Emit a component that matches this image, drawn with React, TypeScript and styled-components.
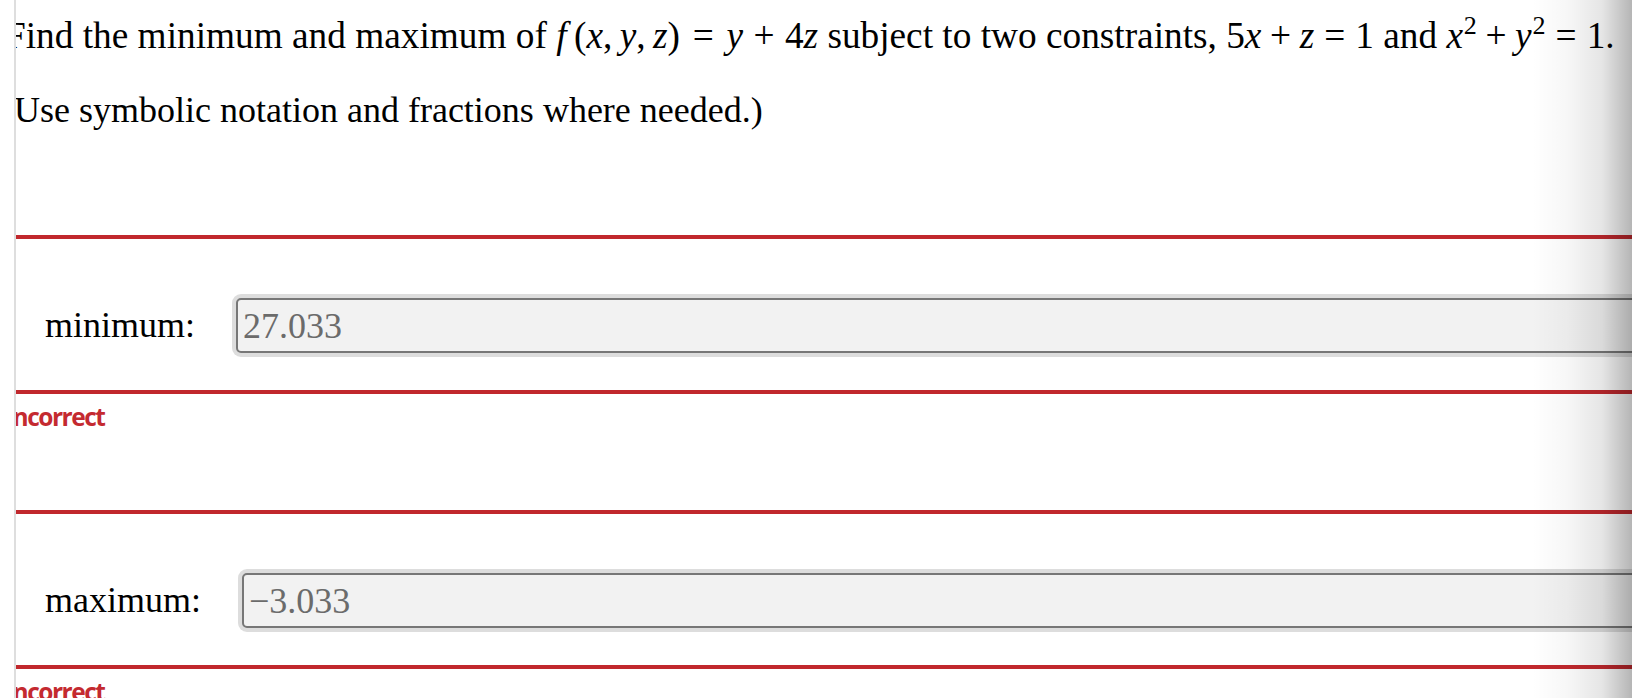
import React from 'react'
import styled, { createGlobalStyle } from 'styled-components'

const GlobalStyle = createGlobalStyle`
  html, body {
    margin: 0;
    padding: 0;
    height: 100%;
    overflow: hidden;
    background: #ffffff;
  }
`

const Frame = styled.div`
  position: relative;
  height: 100vh;
  margin-left: 14px;
  border-left: 2px solid #dedede;
  overflow: hidden;
`

const Content = styled.div`
  width: 1720px;
  margin-left: -14px;
  font-family: "Liberation Serif", "Times New Roman", serif;
  font-size: 36px;
  color: #000;
`

const Prompt = styled.p<{ $gap: number; $size?: number; $indent?: number }>`
  margin: ${({ $gap }) => $gap}px 0 0 ${({ $indent = 0 }) => $indent}px;
  font-size: ${({ $size = 36 }) => $size}px;
  line-height: 41px;
  white-space: nowrap;
`

const V = styled.i`
  font-style: italic;
`

const FVar = styled(V)`
  margin-right: 0.2em;
`

const Rel = styled.span<{ $wide?: boolean }>`
  margin: 0 ${({ $wide }) => ($wide ? '0.34em' : '0.27em')};
`

const Bin = styled.span<{ $wide?: boolean }>`
  margin: 0 ${({ $wide }) => ($wide ? '0.28em' : '0.23em')};
`

const Thin = styled.span`
  margin-right: 0.2em;
`

const Sup = styled.sup`
  font-size: 70%;
  line-height: 0;
  vertical-align: 0.55em;
  margin-left: 0.03em;
`

const Part = styled.section<{ $gap: number }>`
  margin-top: ${({ $gap }) => $gap}px;
  border-top: 4px solid #c1282d;
  border-bottom: 4px solid #c1282d;
  padding: 59px 0 37px 43px;
`

const Row = styled.div`
  display: flex;
  align-items: center;
`

const Label = styled.span`
  margin-right: 41px;
  line-height: 41px;
  white-space: nowrap;
`

const Answer = styled.input`
  flex: 1;
  box-sizing: border-box;
  height: 55px;
  padding: 0 5px;
  border: 2px solid #777777;
  border-radius: 5px;
  box-shadow: 0 0 0 4px #dddddd;
  background: #f2f2f2;
  font-family: "Liberation Serif", "Times New Roman", serif;
  font-size: 36px;
  color: #6b6b6b;
  outline: none;
`

const Feedback = styled.div`
  box-sizing: border-box;
  height: 116px;
  padding: 7px 0 0 4px;
  font-family: "Open Sans", "Noto Sans", sans-serif;
  font-weight: 700;
  font-size: 24.5px;
  letter-spacing: -1.5px;
  line-height: 32px;
  color: #c42a30;
`

const Shade = styled.div`
  position: absolute;
  top: 0;
  right: 0;
  width: 100px;
  height: 100%;
  pointer-events: none;
  background: linear-gradient(
    to right,
    rgba(0, 0, 0, 0) 0%,
    rgba(0, 0, 0, 0.03) 35%,
    rgba(0, 0, 0, 0.1) 70%,
    rgba(0, 0, 0, 0.29) 100%
  );
`

const answers = [
  { label: 'minimum:', value: '27.033', gap: 104 },
  { label: 'maximum:', value: '\u22123.033', gap: 0 },
]

export default function App() {
  return (
    <>
      <GlobalStyle />
      <Frame>
        <Content>
          <Prompt $gap={15} $size={37.3} $indent={3}>
            Find the minimum and maximum of <FVar>f</FVar>(<V>x</V>,<Thin /><V>y</V>,<Thin /><V>z</V>)
            <Rel $wide>=</Rel><V>y</V><Bin $wide>+</Bin>4<V>z</V> subject to two constraints, 5<V>x</V>
            <Bin>+</Bin><V>z</V><Rel>=</Rel>1 and <V>x</V><Sup>2</Sup><Bin>+</Bin><V>y</V>
            <Sup>2</Sup><Rel>=</Rel>1.
          </Prompt>
          <Prompt $gap={34}>(Use symbolic notation and fractions where needed.)</Prompt>
          {answers.map(a => (
            <React.Fragment key={a.label}>
              <Part $gap={a.gap}>
                <Row>
                  <Label>{a.label}</Label>
                  <Answer readOnly value={a.value} />
                </Row>
              </Part>
              <Feedback>Incorrect</Feedback>
            </React.Fragment>
          ))}
        </Content>
        <Shade />
      </Frame>
    </>
  )
}
